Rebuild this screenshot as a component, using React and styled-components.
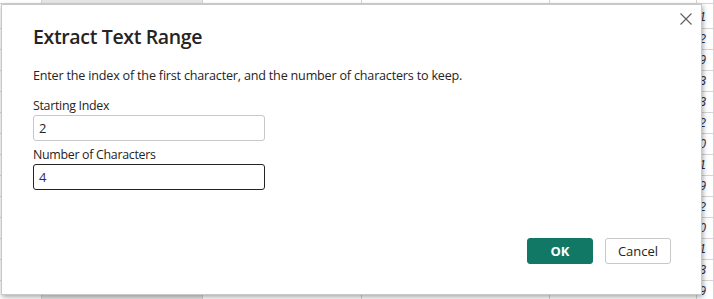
import React from "react";
import styled, { createGlobalStyle } from "styled-components";

const Global = createGlobalStyle`
  html, body { margin: 0; padding: 0; background: #fff; }
  body { width: 714px; height: 299px; overflow: hidden; font-family: "Open Sans", "Noto Sans", sans-serif; }
`;

const Page = styled.div`
  position: relative;
  width: 714px;
  height: 299px;
  overflow: hidden;
  background: #fff;
`;

const Sheet = styled.div`
  display: flex;
  flex-direction: column;
  margin-top: -17px;
`;

const SheetRow = styled.div`
  display: grid;
  grid-template-columns: 42px 161px 159px 188px 147px 17px;
  height: ${(p) => p.$h}px;
  border-bottom: 1px solid #d4d4d4;
  box-sizing: border-box;
`;

const Cell = styled.div`
  border-right: 1px solid #d4d4d4;
  background: ${(p) => (p.$shade ? "#e6e6e6" : "transparent")};
  font-family: "Liberation Sans", Arial, sans-serif;
  font-size: 12px;
  line-height: ${(p) => p.$lh || 20}px;
  padding: 0 ${(p) => p.$pr || 4}px 0 4px;
  color: #222;
  white-space: nowrap;
  overflow: hidden;
  display: flex;
  justify-content: ${(p) => (p.$right ? "flex-end" : "flex-start")};
  font-style: ${(p) => (p.$italic ? "italic" : "normal")};
  ${(p) => p.$blue && "color: #1e2f5a;"}
`;

const Dialog = styled.div`
  position: absolute;
  left: 1px;
  top: 4px;
  width: 701px;
  height: 291px;
  box-sizing: border-box;
  background: #fff;
  border: 1px solid #c8c8c8;
  box-shadow: 1px 2px 5px rgba(0, 0, 0, 0.35);
  display: flex;
  flex-direction: column;
  padding: 18px 30px 30px 31px;
  color: #252423;
`;

const Close = styled.button`
  position: absolute;
  top: 4px;
  right: 5px;
  width: 20px;
  height: 20px;
  padding: 0;
  border: none;
  background: transparent;
  display: flex;
  align-items: center;
  justify-content: center;
`;

const Title = styled.h2`
  margin: 0;
  font-size: 19.5px;
  letter-spacing: -0.35px;
  line-height: 28px;
  font-weight: 600;
  color: #252423;
`;

const Desc = styled.p`
  margin: 15px 0 0;
  font-size: 12.6px;
  letter-spacing: -0.2px;
  line-height: 20px;
  color: #252423;
`;

const Label = styled.label`
  display: block;
  margin-top: ${(p) => p.$mt}px;
  font-size: 12.4px;
  letter-spacing: -0.3px;
  line-height: 16px;
  color: #252423;
`;

const Input = styled.div`
  margin-top: 1px;
  width: 232px;
  height: 26px;
  box-sizing: border-box;
  border: 1px solid ${(p) => (p.$focused ? "#252423" : "#c8c8c8")};
  border-radius: 3px;
  padding: 0 5px;
  font-size: 13px;
  line-height: 24px;
  color: ${(p) => (p.$focused ? "#3b1f6b" : "#252423")};
`;

const Actions = styled.div`
  margin-top: auto;
  display: flex;
  justify-content: flex-end;
  gap: 12px;
`;

const Button = styled.button`
  width: ${(p) => p.$w}px;
  height: 26px;
  box-sizing: border-box;
  border-radius: 3px;
  font-family: "Open Sans", "Noto Sans", sans-serif;
  font-size: 13px;
  font-weight: ${(p) => (p.$primary ? 700 : 400)};
  background: ${(p) => (p.$primary ? "#117865" : "#fff")};
  color: ${(p) => (p.$primary ? "#fff" : "#252423")};
  border: 1px solid ${(p) => (p.$primary ? "#117865" : "#c8c8c8")};
  padding: 0;
`;

const digits = ["1", "2", "9", "3", "3", "2", "0", "1", "9", "2", "0", "1", "3", "9"];

export default function App() {
  return (
    <Page>
      <Global />
      <Sheet>
        <SheetRow $h={21}>
          <Cell />
          <Cell $shade>X00001</Cell>
          <Cell>Male</Cell>
          <Cell>Bachelor's Degree</Cell>
          <Cell $right>6/12/2020</Cell>
          <Cell />
        </SheetRow>
        {digits.map((d, i) => (
          <SheetRow key={i} $h={i === 0 ? 25 : 21}>
            <Cell />
            <Cell $shade />
            <Cell />
            <Cell />
            <Cell />
            <Cell $italic $blue $right $pr={7} $lh={i === 0 ? 26 : 20}>{d}</Cell>
          </SheetRow>
        ))}
      </Sheet>
      <Dialog>
        <Close aria-label="Close">
          <svg width="12" height="12" viewBox="0 0 12 12">
            <path d="M0.5 0.5 L11.5 11.5 M11.5 0.5 L0.5 11.5" stroke="#605e5c" strokeWidth="1.1" />
          </svg>
        </Close>
        <Title>Extract Text Range</Title>
        <Desc>Enter the index of the first character, and the number of characters to keep.</Desc>
        <Label $mt={12}>Starting Index</Label>
        <Input>2</Input>
        <Label $mt={6}>Number of Characters</Label>
        <Input $focused>4</Input>
        <Actions>
          <Button $primary $w={66}>OK</Button>
          <Button $w={66}>Cancel</Button>
        </Actions>
      </Dialog>
    </Page>
  );
}
